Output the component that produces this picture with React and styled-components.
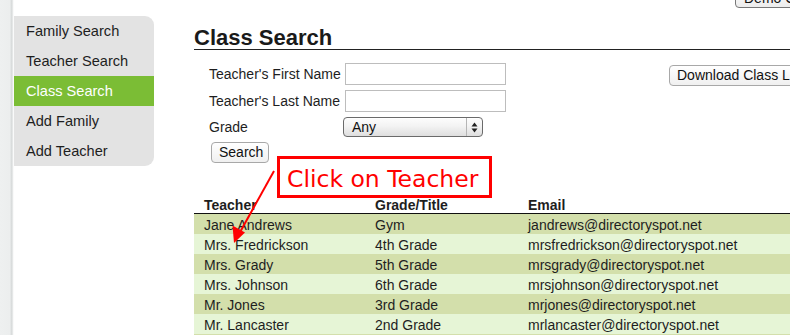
import React from "react";
import styled, { createGlobalStyle } from "styled-components";

const Global = createGlobalStyle`
  html, body { margin: 0; padding: 0; background: #fff; overflow: hidden; }
  body { font-family: "Liberation Sans", Arial, sans-serif; color: #222; }
  * { box-sizing: border-box; }
`;

const Page = styled.div`
  display: flex;
  width: 790px;
  height: 335px;
  overflow: hidden;
  position: relative;
`;

const Strip = styled.div`
  width: 14px;
  flex: none;
  background: linear-gradient(to right, #eef0f0 0, #eceeee 10px, #dde0e0 11px, #d6d9d9 12px, #f4f5f5 13px, #fff 14px);
`;

const Sidebar = styled.nav`
  width: 140px;
  flex: none;
  margin-top: 16px;
  align-self: flex-start;
  background: #e3e3e3;
  border-radius: 0 9px 9px 0;
  overflow: hidden;
`;

const NavItem = styled.div`
  height: 30px;
  line-height: 30px;
  padding-left: 12px;
  font-size: 14.6px;
  color: ${(p) => (p.$active ? "#fff" : "#1e1e1e")};
  background: ${(p) => (p.$active ? "#7bbd35" : "transparent")};
`;

const Main = styled.main`
  flex: 1;
  margin-left: 40px;
  min-width: 0;
  position: relative;
`;

const TopBar = styled.div`
  height: 8px;
  overflow: hidden;
  display: flex;
  align-items: flex-end;
`;

const DemoButton = styled.button`
  margin-left: 541px;
  height: 20px;
  flex: none;
  font-family: "Liberation Sans", Arial, sans-serif;
  font-size: 14px;
  padding: 0 8px;
  background: linear-gradient(#fff, #ececec);
  border: 1px solid #777;
  border-radius: 4px;
  line-height: 18px;
  color: #111;
`;

const Title = styled.h1`
  margin: 18px 0 0;
  font-size: 22px;
  line-height: 23px;
  font-weight: bold;
  color: #1a1a1a;
  border-bottom: 1px solid #222;
`;

const FormArea = styled.div`
  display: flex;
  align-items: flex-start;
  margin-top: 13px;
  padding-left: 15px;
`;

const FormGrid = styled.div`
  display: grid;
  grid-template-columns: 136px 161px;
  grid-template-rows: 22px 22px 20px 21px;
  row-gap: 5px;
  align-items: center;
`;

const Label = styled.label`
  font-size: 14px;
  color: #1e1e1e;
  white-space: nowrap;
`;

const TextInput = styled.input`
  width: 161px;
  height: 22px;
  border: 1px solid #bdbdbd;
  background: #fff;
  padding: 0 3px;
  font-size: 13px;
  outline: none;
`;

const SelectBox = styled.div`
  margin-left: -2px;
  width: 140px;
  height: 20px;
  border: 1px solid #6a6a6a;
  border-radius: 4px;
  background: linear-gradient(#fdfdfd, #f3f3f3 45%, #dedede);
  display: flex;
  align-items: center;
  font-size: 14px;
  color: #111;
  box-shadow: inset 0 1px 0 #fff;
`;

const SelectText = styled.span`
  flex: 1;
  padding-left: 8px;
`;

const SelectArrows = styled.span`
  width: 16px;
  height: 100%;
  border-left: 1px solid #b5b5b5;
  display: flex;
  align-items: center;
  justify-content: center;
`;

const Button = styled.button`
  height: 21px;
  font-family: "Liberation Sans", Arial, sans-serif;
  font-size: 14px;
  color: #111;
  background: linear-gradient(#ffffff, #f0f0f0);
  border: 1px solid #a8a8a8;
  border-radius: 4px;
  padding: 0 7px;
  line-height: 19px;
  white-space: nowrap;
  margin-left: ${(p) => p.$ml || 0}px;
  margin-top: ${(p) => p.$mt || 0}px;
  flex: none;
  width: ${(p) => (p.$w ? p.$w + "px" : "auto")};
`;

const Table = styled.table`
  margin-top: 33px;
  width: 620px;
  border-collapse: collapse;
  table-layout: fixed;
  font-size: 14px;
`;

const Col = styled.col`
  width: ${(p) => (p.$w ? p.$w + "px" : "auto")};
`;

const Th = styled.th`
  text-align: left;
  font-weight: bold;
  padding: 1px 0 0 10px;
  line-height: 16px;
  color: #1e1e1e;
  border-bottom: 1px solid #111;
`;

const Row = styled.tr`
  background: ${(p) => (p.$odd ? "#d3dfab" : "#e6f5d6")};
`;

const Td = styled.td`
  padding: 2px 0 0 10px;
  height: 20px;
  line-height: 18px;
  color: #1e1e1e;
  white-space: nowrap;
  vertical-align: top;
`;

const Callout = styled.div`
  position: absolute;
  left: 83px;
  top: 156px;
  width: 215px;
  height: 42px;
  border: 3px solid #f00;
  background: #fff;
  color: #f00;
  font-family: "DejaVu Sans", Verdana, sans-serif;
  font-size: 23.5px;
  line-height: 32px;
  padding: 4px 0 0 7px;
  white-space: nowrap;
`;

const ArrowSvg = styled.svg`
  position: absolute;
  left: 0;
  top: 0;
  pointer-events: none;
`;

const teachers = [
  ["Jane Andrews", "Gym", "jandrews@directoryspot.net"],
  ["Mrs. Fredrickson", "4th Grade", "mrsfredrickson@directoryspot.net"],
  ["Mrs. Grady", "5th Grade", "mrsgrady@directoryspot.net"],
  ["Mrs. Johnson", "6th Grade", "mrsjohnson@directoryspot.net"],
  ["Mr. Jones", "3rd Grade", "mrjones@directoryspot.net"],
  ["Mr. Lancaster", "2nd Grade", "mrlancaster@directoryspot.net"],
  ["Mrs. Miller", "1st Grade", "mrsmiller@directoryspot.net"],
];

const nav = ["Family Search", "Teacher Search", "Class Search", "Add Family", "Add Teacher"];

export default function App() {
  return (
    <>
      <Global />
      <Page>
        <Strip />
        <Sidebar>
          {nav.map((n) => (
            <NavItem key={n} $active={n === "Class Search"}>
              {n}
            </NavItem>
          ))}
        </Sidebar>
        <Main>
          <TopBar>
            <DemoButton>Demo Class</DemoButton>
          </TopBar>
          <Title>Class Search</Title>
          <FormArea>
            <FormGrid>
              <Label>Teacher's First Name</Label>
              <TextInput type="text" />
              <Label>Teacher's Last Name</Label>
              <TextInput type="text" />
              <Label>Grade</Label>
              <SelectBox>
                <SelectText>Any</SelectText>
                <SelectArrows>
                  <svg width="7" height="11" viewBox="0 0 7 11">
                    <path d="M3.5 0.5 L6.5 4.5 L0.5 4.5 Z" fill="#222" />
                    <path d="M3.5 10.5 L6.5 6.5 L0.5 6.5 Z" fill="#222" />
                  </svg>
                </SelectArrows>
              </SelectBox>
              <Button $ml={2} $w={58}>Search</Button>
            </FormGrid>
            <Button $ml={163} $mt={2}>Download Class List</Button>
          </FormArea>
          <Table>
            <colgroup>
              <Col $w={171} />
              <Col $w={153} />
              <Col />
            </colgroup>
            <thead>
              <tr>
                <Th>Teacher</Th>
                <Th>Grade/Title</Th>
                <Th>Email</Th>
              </tr>
            </thead>
            <tbody>
              {teachers.map((t, i) => (
                <Row key={t[0]} $odd={i % 2 === 0}>
                  <Td>{t[0]}</Td>
                  <Td>{t[1]}</Td>
                  <Td>{t[2]}</Td>
                </Row>
              ))}
            </tbody>
          </Table>
          <Callout>Click on Teacher</Callout>
          <ArrowSvg width="120" height="335" viewBox="0 0 120 335">
            <line x1="80" y1="171" x2="45" y2="234" stroke="#f00" strokeWidth="2" />
            <path d="M40 243 L38.5 225.5 L51 232.5 Z" fill="#f00" />
          </ArrowSvg>
        </Main>
      </Page>
    </>
  );
}
